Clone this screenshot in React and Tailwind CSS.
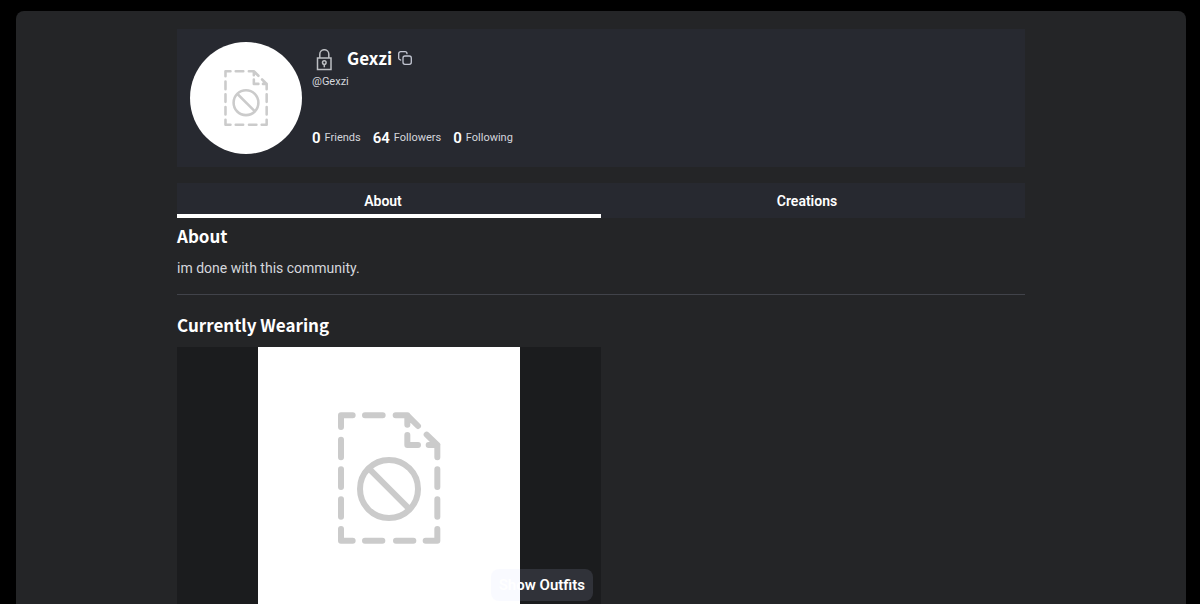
import React from 'react';

function MissingImage({ className }) {
  return (
    <svg
      viewBox="-186 -159 786 786"
      className={className}
      fill="none"
      stroke="#cbcbcb"
      strokeWidth="18"
      strokeLinecap="round"
      strokeLinejoin="round"
      role="img"
      aria-label="Image unavailable"
    >
      <path d="M63 81V46H98M135 46H188M227 46H262L294 78M262 46V74M262 105V135H294M320 104L352 135H326M352 135V172" />
      <path d="M352 208V261M352 298V350M352 387V422H317M280 422H228M187 422H135M98 422H63V387M63 350V298M63 261V208M63 172V119" />
      <circle cx="207" cy="267" r="87" />
      <path d="M147 206L266 325" strokeLinecap="butt" />
    </svg>
  );
}

function LockIcon() {
  return (
    <svg viewBox="0 0 16 22" className="h-[22px] w-4" fill="none" stroke="#bcbec2" strokeWidth="1.5" aria-hidden="true">
      <rect x="1.5" y="9" width="13.5" height="11.5" />
      <path d="M3.8 9V5.2a4.5 4.5 0 0 1 9 0V9" />
      <circle cx="8.3" cy="13.6" r="1.8" />
      <path d="M8.3 15.3V18.3" />
    </svg>
  );
}

function CopyIcon() {
  return (
    <svg viewBox="0 0 14 14" className="h-3.5 w-3.5" fill="none" stroke="#c3c6d2" strokeWidth="1.3" strokeLinecap="round" aria-hidden="true">
      <rect x="5" y="5" width="8.3" height="8.3" rx="2" />
      <path d="M2.7 9A2 2 0 0 1 .7 7V2.7a2 2 0 0 1 2-2H7a2 2 0 0 1 2 2" />
    </svg>
  );
}

const stats = [
  { value: '0', label: 'Friends' },
  { value: '64', label: 'Followers' },
  { value: '0', label: 'Following' },
];

const heading = "font-['Noto_Sans_CJK_SC',sans-serif] text-[17px] leading-6 font-bold";

export default function App() {
  return (
    <div className="min-h-screen bg-black pt-[11px] pr-3.5 pl-4 font-['Roboto',sans-serif] text-white">
      <main className="min-h-screen rounded-t-lg bg-[#242527] pt-[18px]">
        <div className="mx-auto max-w-[848px]">
          <header className="flex gap-2.5 bg-[#272930] p-[13px]">
            <div className="size-28 shrink-0 overflow-hidden rounded-full bg-white">
              <MissingImage className="size-full" />
            </div>
            <div className="flex flex-col justify-between pt-1 pb-1">
              <div>
                <div className="flex h-6 items-center">
                  <span className="mr-[15px] ml-1 pt-1"><LockIcon /></span>
                  <h1 className={`mr-1.5 ${heading}`}>Gexzi</h1>
                  <button type="button" aria-label="Copy profile link"><CopyIcon /></button>
                </div>
                <p className="mt-1 text-[11px] leading-4 text-[#d5d7dd]">@Gexzi</p>
              </div>
              <ul className="flex gap-3">
                {stats.map((s) => (
                  <li key={s.label}>
                    <a href="#" className="flex h-6 items-center gap-1">
                      <span className="text-[15px] font-semibold">{s.value}</span>
                      <span className="text-[11px] text-[#d5d7dd]">{s.label}</span>
                    </a>
                  </li>
                ))}
              </ul>
            </div>
          </header>

          <div role="tablist" className="mt-4 grid grid-cols-2 bg-[#272930] text-sm font-semibold">
            <button type="button" role="tab" aria-selected="true" className="h-[35px] border-b-4 border-white pt-1 pr-3">About</button>
            <button type="button" role="tab" aria-selected="false" className="h-[35px] border-b-4 border-transparent pt-1 pr-3">Creations</button>
          </div>

          <section className="border-b border-[#41434a] pt-1.5 pb-4">
            <h2 className={heading}>About</h2>
            <p className="mt-2.5 text-sm leading-5 text-[#d5d7dd]">im done with this community.</p>
          </section>

          <section className="pt-[18px]">
            <h2 className={heading}>Currently Wearing</h2>
            <div className="relative mt-2.5 flex w-1/2 justify-center bg-[#1b1c1e]">
              <div className="size-[262px] bg-white">
                <MissingImage className="size-full" />
              </div>
              <button type="button" className="absolute right-2 bottom-2 h-8 rounded-lg bg-[#d0d9fb]/12 px-2 text-[15px] font-semibold">
                Show Outfits
              </button>
            </div>
          </section>
        </div>
      </main>
    </div>
  );
}
